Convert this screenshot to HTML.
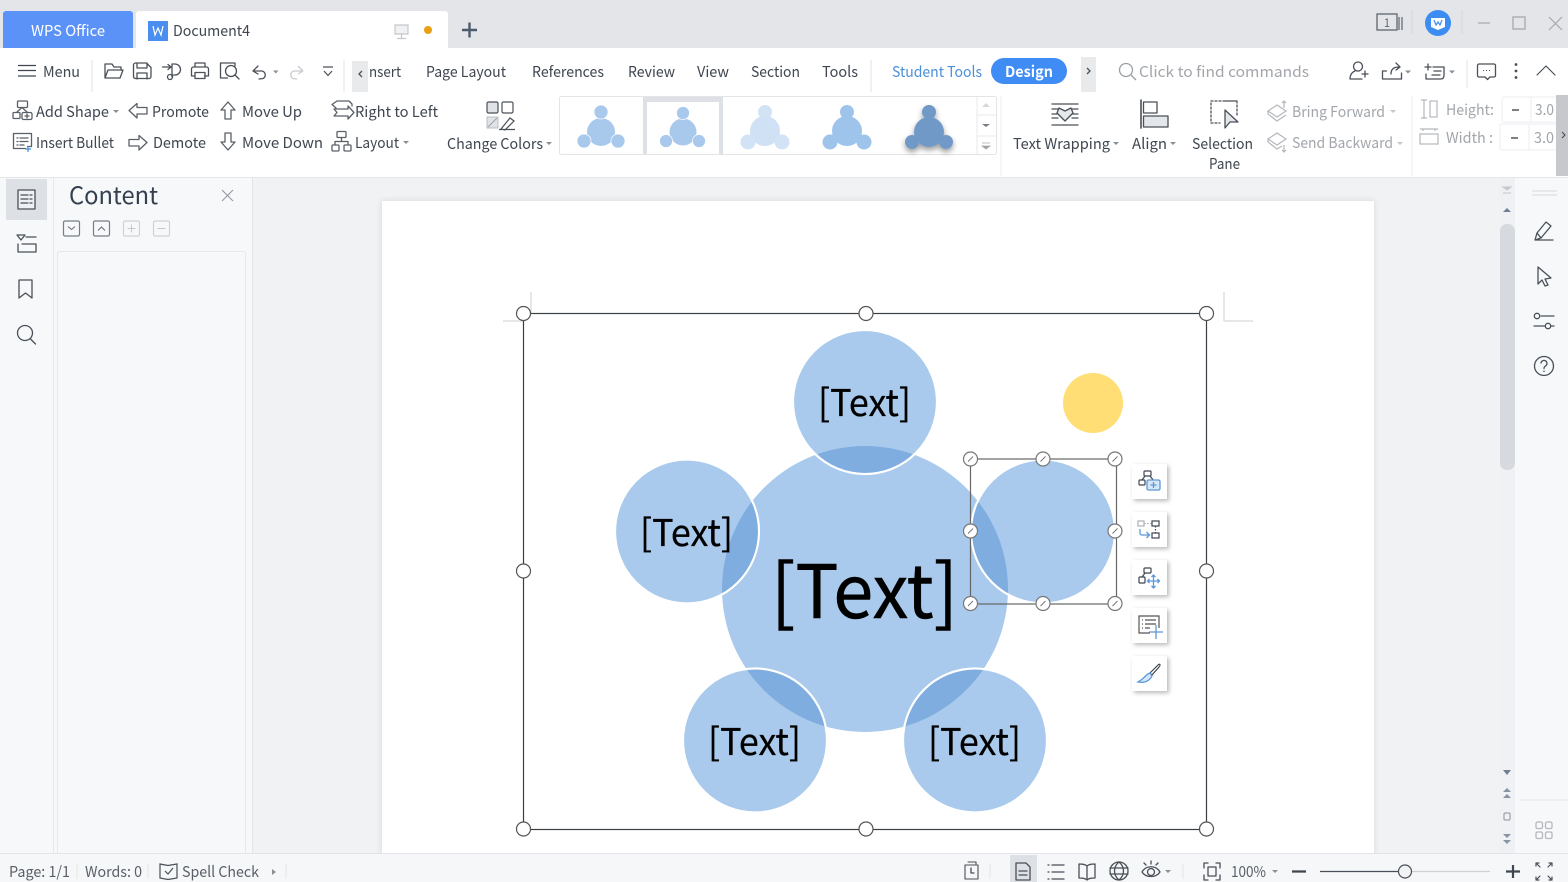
<!DOCTYPE html>
<html><head><meta charset="utf-8"><style>
html,body{margin:0;padding:0;background:#fff;width:1568px;height:882px;overflow:hidden}
svg{display:block}
text{font-family:"Noto Sans CJK SC","Liberation Sans",sans-serif;font-size:15px;fill:#3f4650}
.g{fill:#a2a6ab}
.i{fill:none;stroke:#4a5058;stroke-width:1.3;stroke-linejoin:round;stroke-linecap:round}
.li{fill:none;stroke:#b4b8bc;stroke-width:1.2}
.h{fill:#fff;stroke:#555;stroke-width:1.2}
.hs{fill:#fff;stroke:#777;stroke-width:1.2}
.sl{stroke:#777;stroke-width:1;fill:none}
.bt{fill:#fff;filter:url(#sh)}
.big{fill:#000;font-size:37px;stroke:#000;stroke-width:.25}
.ib{fill:none;stroke:#5a98d8;stroke-width:1.3}
</style></head><body>
<svg width="1568" height="882" viewBox="0 0 1568 882" xmlns="http://www.w3.org/2000/svg">
<defs>
<filter id="sh" x="-30%" y="-30%" width="170%" height="170%"><feDropShadow dx="2" dy="2" stdDeviation="2" flood-color="#000" flood-opacity=".28"/></filter>
<filter id="sp" x="-10%" y="-10%" width="120%" height="120%"><feDropShadow dx="0" dy="0" stdDeviation="3" flood-color="#000" flood-opacity=".12"/></filter>
<filter id="ds" x="-30%" y="-30%" width="160%" height="160%"><feDropShadow dx="0" dy="3" stdDeviation="3" flood-color="#000" flood-opacity=".4"/></filter>
<clipPath id="cc"><circle cx="865" cy="589" r="143"/></clipPath>
</defs>

<!-- base -->
<rect width="1568" height="882" fill="#f0f2f4"/>
<rect width="1568" height="48" fill="#e3e5e8"/>
<rect y="48" width="1568" height="129" fill="#fff"/>
<rect y="177" width="1568" height="1.500" fill="#e4e6e8"/>

<!-- tabs -->
<path d="M3 48V14a3 3 0 0 1 3-3H130a3 3 0 0 1 3 3V48Z" fill="#5b92f8"/>
<text x="31" y="36" textLength="74" lengthAdjust="spacingAndGlyphs" style="fill:#fff">WPS Office</text>
<path d="M136 48V14a3 3 0 0 1 3-3H445a3 3 0 0 1 3 3V48Z" fill="#fff"/>
<rect x="148" y="21" width="20" height="20" fill="#4a8ff0"/>
<path d="M153 26l2 9 3-7 3 7 2-9" fill="none" stroke="#fff" stroke-width="1.200"/>
<text x="173" y="36" textLength="77" lengthAdjust="spacingAndGlyphs">Document4</text>
<path d="M395 25h13v9h-13zM401.500 34v4M397 38.500h9" fill="#f0f1f2" stroke="#c4c8cc" stroke-width="1.200"/>
<circle cx="428" cy="30" r="4" fill="#eb9f12"/>
<path d="M462 30h15M469.500 22.500v15" stroke="#4d5a6e" stroke-width="2.400" fill="none"/>

<!-- window controls -->
<rect x="1377" y="14" width="20" height="16" fill="none" stroke="#5f666e" stroke-width="1.300"/>
<text x="1384" y="27" textLength="6" lengthAdjust="spacingAndGlyphs" style="font-size:12px;fill:#5f666e">1</text>
<path d="M1399 17v13M1402 17v13" stroke="#5f666e" stroke-width="1.200"/>
<path d="M1412 10v24M1462 10v24" stroke="#d5d7da"/>
<circle cx="1438" cy="23" r="13" fill="#3d8cf2"/>
<path d="M1431 18h14v9l-7 3-7-3z" fill="#fff"/>
<path d="M1434 20l2 5 2-3 2 3 2-5" fill="none" stroke="#3d8cf2" stroke-width="1.200"/>
<path d="M1478 23h12" stroke="#a4a8ad" stroke-width="1.200"/>
<rect x="1513" y="17" width="12" height="12" fill="none" stroke="#a4a8ad" stroke-width="1.300"/>
<path d="M1549 17l13 13M1562 17l-13 13" stroke="#a4a8ad" stroke-width="1.200"/>

<!-- menu row -->
<path d="M18 65.500h18M18 70.500h18M18 76h18" stroke="#3f4650" stroke-width="1.300"/>
<text x="43" y="77" textLength="37" lengthAdjust="spacingAndGlyphs">Menu</text>
<path d="M92 60v32M344 60v32M871 60v32M1467 60v28" stroke="#e2e4e6"/>
<g class="i">
<path d="M105 78V64h7l2 3h7v3M105 78l3-8h15l-3 8z"/>
<path d="M133.500 65a2 2 0 0 1 2-2h11l4.500 4.500v9a2 2 0 0 1-2 2h-13.500a2 2 0 0 1-2-2zM137 63v5h10v-5M137 79v-6h10v6"/>
<path d="M162.500 67h8M168 64.500l3 2.500-3 2.500M172 64h3a5.500 5.500 0 0 1 0 11h-3M172 64v13"/><circle cx="170" cy="77" r="2.500"/>
<path d="M195 67v-4h10v4M191.500 76v-7a2 2 0 0 1 2-2h13a2 2 0 0 1 2 2v7h-4M195 76h-3.500M195 72.500h10v6h-10z"/>
<path d="M235 66v-3h-14.500v15h7"/><circle cx="231" cy="71" r="5.500"/><path d="M235 75l4 4"/>
<path d="M253 71l5-5M253 71l5 3M253 71h9a4 4 0 0 1 1 7.500l-4 .5"/>
</g>
<path d="M273 70.500h5.500l-2.700 3z" fill="#8a9097"/>
<path d="M303 71l-5-5M303 71l-5 3M303 71h-9a4 4 0 0 0-1 7.500l4 .5" fill="none" stroke="#c8cbcf" stroke-width="1.300"/>
<path d="M323 67h10M324 71l4 4.500 4-4.500" fill="none" stroke="#4a5058" stroke-width="1.200"/>
<rect x="352" y="61" width="16" height="31" fill="#e8eaec"/>
<path d="M362 71l-3 3 3 3" fill="none" stroke="#4a5058" stroke-width="1.300"/>
<text x="369" y="77" textLength="32" lengthAdjust="spacingAndGlyphs">nsert</text>
<text x="426" y="77" textLength="80" lengthAdjust="spacingAndGlyphs">Page Layout</text>
<text x="532" y="77" textLength="72" lengthAdjust="spacingAndGlyphs">References</text>
<text x="628" y="77" textLength="47" lengthAdjust="spacingAndGlyphs">Review</text>
<text x="697" y="77" textLength="32" lengthAdjust="spacingAndGlyphs">View</text>
<text x="751" y="77" textLength="49" lengthAdjust="spacingAndGlyphs">Section</text>
<text x="822" y="77" textLength="36" lengthAdjust="spacingAndGlyphs">Tools</text>
<text x="892" y="77" textLength="90" lengthAdjust="spacingAndGlyphs" style="fill:#4a90d9">Student Tools</text>
<rect x="991" y="58" width="76" height="26" rx="13" fill="#3f8cf5"/>
<text x="1005" y="77" textLength="48" lengthAdjust="spacingAndGlyphs" style="fill:#fff;font-weight:700">Design</text>
<rect x="1081" y="57" width="15" height="35" fill="#e8eaec"/>
<path d="M1087 68l3 3-3 3" fill="none" stroke="#4a5058" stroke-width="1.300"/>
<circle cx="1126" cy="70" r="6.500" fill="none" stroke="#9aa0a6" stroke-width="1.300"/>
<path d="M1131 75l5 5" stroke="#9aa0a6" stroke-width="1.300"/>
<text x="1139" y="77" textLength="170" lengthAdjust="spacingAndGlyphs" class="g">Click to find commands</text>
<g class="i">
<circle cx="1358" cy="66.500" r="4.500"/><path d="M1355 71c-3 1-5 4-5 8h12M1362 74h6M1365 71v6"/>
<path d="M1382.500 79v-8h4M1382.500 79h19v-6M1391 74c0-5 3-7 8-7M1396 63l4 4-4 3"/>
<path d="M1428 64v6M1425 67h6M1433 67h11v8c0 3-1 4-3 4h-15v-5M1434 71h7M1432 75h8"/>
<path d="M1477.500 65.500a1.500 1.500 0 0 1 1.500-1.500h15a1.500 1.500 0 0 1 1.500 1.500v10a1.500 1.500 0 0 1-1.500 1.500h-4l-2.500 2.500-2.500-2.500h-6a1.500 1.500 0 0 1-1.500-1.500z"/>
<path d="M1537 75l9-9 9 9" stroke-width="1.200"/>
</g>
<path d="M1483 70.500h1M1486 70.500h1M1489 70.500h1" stroke="#4a5058"/>
<path d="M1405 70.500h6l-3 3zM1449 70.500h6l-3 3z" fill="#8a9097"/>
<circle cx="1516" cy="64.500" r="1.400" fill="#4a5058"/><circle cx="1516" cy="71" r="1.400" fill="#4a5058"/><circle cx="1516" cy="77.500" r="1.400" fill="#4a5058"/>

<!-- ribbon left -->
<text x="36" y="117" textLength="73" lengthAdjust="spacingAndGlyphs">Add Shape</text>
<text x="152" y="117" textLength="57" lengthAdjust="spacingAndGlyphs">Promote</text>
<text x="242" y="117" textLength="60" lengthAdjust="spacingAndGlyphs">Move Up</text>
<text x="355" y="117" textLength="83" lengthAdjust="spacingAndGlyphs">Right to Left</text>
<text x="36" y="148" textLength="78" lengthAdjust="spacingAndGlyphs">Insert Bullet</text>
<text x="153" y="148" textLength="53" lengthAdjust="spacingAndGlyphs">Demote</text>
<text x="242" y="148" textLength="81" lengthAdjust="spacingAndGlyphs">Move Down</text>
<text x="355" y="148" textLength="44" lengthAdjust="spacingAndGlyphs">Layout</text>
<text x="447" y="149" textLength="96" lengthAdjust="spacingAndGlyphs">Change Colors</text>
<path d="M113 110h6l-3 3zM403 141h6l-3 3zM546 142h6l-3 3z" fill="#8a9097"/>
<g class="i" stroke-width="1.100" style="stroke:#5a6068">
<rect x="17.500" y="101" width="10" height="6.500" rx="1"/><path d="M22 107.500l-5 4.500M22 107.500l5 4.500"/><rect x="13" y="112.500" width="7" height="6" rx="1"/><rect x="22" y="112.500" width="10" height="7" rx="1.500"/><path d="M27 114v4M25 116h4"/>
<path d="M129 110.500l8-7v4h10v6.500h-10v4z"/>
<path d="M228 102l7 8h-4v9h-6v-9h-4z"/>
<path d="M336 108l-4-3.500 5-3.500h12l3 3v2M334 109h14v-3l6 6.500-6 6.500v-3h-14l3-3.500z"/>
<path d="M13.500 133.500h18v13h-4M13.500 133.500v15h12M17 138h1M20 138h8M17 141.500h1M20 141.500h8M17 145h1M20 145h4"/>
<path d="M147 142.500l-8-7v4h-10v6.500h10v4z"/>
<path d="M228 150l7-8h-4v-9h-6v9h-4z"/>
<rect x="337" y="131.500" width="9" height="6" rx="1"/><path d="M341.500 137.500v4M335 145v-3.500h13v3.500"/><rect x="332" y="145" width="7" height="6" rx="1"/><rect x="344" y="145" width="7" height="6" rx="1"/>
</g>
<path d="M28 146v6M25 149h6" stroke="#4a90d9" stroke-width="1.200"/>
<rect x="487" y="102" width="11" height="11" rx="1.500" fill="#dfe3e7" stroke="#4a5058" stroke-width="1.200"/>
<rect x="502" y="102" width="11" height="11" rx="1.500" fill="#fff" stroke="#4a5058" stroke-width="1.200"/>
<rect x="487" y="117" width="11" height="11" fill="#dfe3e7" stroke="#b8bcc1"/>
<path d="M488 127l9-9" stroke="#9ea3a9"/>
<path d="M501 129l9-11 4 3-9 9zM499 129.500h16" fill="none" stroke="#4a5058" stroke-width="1.200"/>

<!-- gallery -->
<rect x="559.500" y="96.500" width="437" height="58" rx="2" fill="#fff" stroke="#e2e4e7"/>
<path d="M643 154V97h80v57h-4V102h-72v52z" fill="#dde1e6"/>
<path d="M977 97v57M977 115h19M977 136h19" stroke="#e8eaec"/>
<path d="M982 107l4-4 4 4z" fill="#d5d8db"/><path d="M982 124h8l-4 3z" fill="#777d85"/>
<path d="M982 143h8M982 146h8l-4 3z" stroke="#aaa" stroke-width=".8" fill="#9aa0a6"/>
<g fill="#a8c9ec"><circle cx="601" cy="132" r="14"/><g stroke="#fff" stroke-width=".7"><circle cx="601" cy="112" r="7"/><circle cx="584" cy="141" r="7"/><circle cx="618" cy="141" r="7"/></g></g>
<g fill="#a8c9ec"><circle cx="683" cy="132" r="13.500"/><g stroke="#fff" stroke-width=".7"><circle cx="683" cy="113" r="6.500"/><circle cx="666" cy="141" r="6.500"/><circle cx="699" cy="141" r="6.500"/></g></g>
<g fill="#d0e1f5"><circle cx="765" cy="131" r="15"/><circle cx="765" cy="112" r="7" fill-opacity=".95"/><circle cx="748" cy="142" r="7.500" fill-opacity=".95"/><circle cx="782" cy="142" r="7.500" fill-opacity=".95"/></g>
<g fill="#9fc4ec"><circle cx="847" cy="131" r="15"/><circle cx="847" cy="112" r="7"/><circle cx="830" cy="142" r="7.500"/><circle cx="864" cy="142" r="7.500"/></g>
<g fill="#7199c8" filter="url(#ds)"><circle cx="929" cy="132" r="15"/><circle cx="929" cy="112" r="7"/><circle cx="912" cy="142" r="7"/><circle cx="946" cy="142" r="7"/></g>

<!-- ribbon right -->
<path d="M1001 96v80M1412 96v80" stroke="#eceef0"/>
<g class="i" stroke-width="1.100">
<path d="M1052 104h26M1052 125h26M1052 109h6M1052 114h5M1052 118h6M1072 109h6M1073 114h5M1072 118h6"/>
<path d="M1059 108l6 3 6-3 2 5-8 8-8-8z" fill="#e6e9ec"/>
<path d="M1141 100v28" stroke-width="1.600"/><rect x="1143.500" y="102" width="13.500" height="11" fill="#fff"/><rect x="1143.500" y="116" width="24.500" height="11" fill="#e3e6ea"/>
<path d="M1225 101h12v15M1237 101h-26v22h9" stroke-dasharray="2 2"/>
<path d="M1225 110v18l5-6h8z" fill="#e3e6ea"/>
</g>
<text x="1013" y="149" textLength="97" lengthAdjust="spacingAndGlyphs">Text Wrapping</text>
<text x="1132" y="149" textLength="35" lengthAdjust="spacingAndGlyphs">Align</text>
<text x="1192" y="149" textLength="61" lengthAdjust="spacingAndGlyphs">Selection</text>
<text x="1209" y="169" textLength="31" lengthAdjust="spacingAndGlyphs">Pane</text>
<path d="M1113 142h6l-3 3zM1170 142h6l-3 3z" fill="#8a9097"/>
<g class="li">
<path d="M1268 111l9-6 9 6-9 6zM1268 111v3l9 7 9-6"/><path d="M1284 101v7M1282 103l2-2 2 2"/>
<path d="M1268 139l9-6 9 6-9 6zM1268 139v3l9 7 5-3"/><path d="M1284 145v7M1282 150l2 2 2-2"/>
<path d="M1421 100h6M1421 118h6M1424 100v18"/><rect x="1430" y="101" width="7" height="16"/>
<path d="M1420 129h18M1423 129v2M1435 129v2"/><rect x="1420" y="134" width="18" height="10"/>
</g>
<text x="1292" y="117" textLength="93" lengthAdjust="spacingAndGlyphs" class="g">Bring Forward</text>
<text x="1292" y="148" textLength="101" lengthAdjust="spacingAndGlyphs" class="g">Send Backward</text>
<text x="1446" y="115" textLength="48" lengthAdjust="spacingAndGlyphs" class="g">Height:</text>
<text x="1446" y="143" textLength="47" lengthAdjust="spacingAndGlyphs" class="g">Width :</text>
<path d="M1390 110h6l-3 3zM1397 142h6l-3 3z" fill="#c3c6ca"/>
<path d="M1556 97h-52a2 2 0 0 0-2 2v21a2 2 0 0 0 2 2h52M1531 97v25M1556 124h-54a2 2 0 0 0-2 2v22a2 2 0 0 0 2 2h54M1529 124v26" fill="#fff" stroke="#eceef0"/>
<path d="M1512 110h7M1511 138h7" stroke="#555" stroke-width="1.600"/>
<text x="1535" y="115" textLength="19" lengthAdjust="spacingAndGlyphs" class="g">3.0</text>
<text x="1534" y="143" textLength="20" lengthAdjust="spacingAndGlyphs" class="g">3.0</text>
<rect x="1556" y="95" width="12" height="81" fill="#c6c8cb"/>
<path d="M1562 132l3 3-3 3" fill="none" stroke="#3f4650"/>

<!-- left panels -->
<rect y="178" width="53" height="675" fill="#f6f8fa"/>
<rect x="53" y="178" width="1" height="675" fill="#e6e8ea"/>
<rect x="54" y="178" width="198" height="675" fill="#f6f8fa"/>
<rect x="252" y="178" width="1" height="675" fill="#e3e5e8"/>
<rect x="6" y="179" width="41" height="41" fill="#dde1e6"/>
<g class="i">
<path d="M18 190h17v19h-17z" fill="#eef0f4"/><path d="M21 195h7M30 195h2M21 199h7M30 199h2M21 203h7M30 203h2"/>
<path d="M17 235l8 0-4 5zM26 237h10M18 244v8h18v-8h-14"/>
<path d="M19 280h13v18l-6.500-5-6.500 5z"/>
<circle cx="25" cy="333" r="7.500"/><path d="M30.500 339l5 5"/>
</g>
<text x="69" y="204" textLength="89" lengthAdjust="spacingAndGlyphs" style="font-size:24px;fill:#34404f">Content</text>
<path d="M222 190l11 11M233 190l-11 11" stroke="#8f959b" stroke-width="1"/>
<g fill="none">
<rect x="63.500" y="221" width="16" height="15" rx="1.500" stroke="#777d85" stroke-width="1.200"/><path d="M68 226.500l3.500 3 3.500-3" stroke="#666c74"/>
<rect x="93.500" y="221" width="16" height="15" rx="1.500" stroke="#777d85" stroke-width="1.200"/><path d="M98 230.500l3.500-3.500 3.500 3.500" stroke="#666c74"/>
<rect x="123.500" y="221" width="16" height="15" rx="1.500" stroke="#cfd2d6" stroke-width="1.200"/><path d="M131.500 224.500v8M127.500 228.500h8" stroke="#c4c8cc"/>
<rect x="153.500" y="221" width="16" height="15" rx="1.500" stroke="#cfd2d6" stroke-width="1.200"/><path d="M157.500 228.500h8" stroke="#c4c8cc"/>
</g>
<rect x="57.500" y="251.500" width="188" height="620" rx="2" fill="#f6f8fa" stroke="#e6e8eb"/>

<!-- page -->
<rect x="253" y="178" width="1247" height="675" fill="#f1f2f4"/>
<rect x="382" y="201" width="992" height="660" fill="#fff" filter="url(#sp)"/>
<path d="M531 292v21M503 321h20M1224 292v29h29" fill="none" stroke="#cfcfcf"/>

<!-- diagram -->
<circle cx="865" cy="589" r="143" fill="#a9caec"/>
<g stroke="#fff" stroke-width="2.200" fill="#a9caec">
<circle cx="865" cy="402" r="72"/><circle cx="687" cy="531.500" r="72"/><circle cx="1043" cy="531.500" r="72"/><circle cx="755" cy="740.500" r="72"/><circle cx="975" cy="740.500" r="72"/>
</g>
<g clip-path="url(#cc)" fill="#7faddf">
<circle cx="865" cy="402" r="70.900"/><circle cx="687" cy="531.500" r="70.900"/><circle cx="1043" cy="531.500" r="70.900"/><circle cx="755" cy="740.500" r="70.900"/><circle cx="975" cy="740.500" r="70.900"/>
</g>
<circle cx="1093" cy="403" r="30" fill="#ffdf75"/>
<text x="771" y="618" textLength="187" lengthAdjust="spacingAndGlyphs" style="fill:#000;font-size:74px;stroke:#000;stroke-width:.5">[Text]</text>
<text x="818" y="416" textLength="93" lengthAdjust="spacingAndGlyphs" class="big">[Text]</text>
<text x="640" y="546" textLength="93" lengthAdjust="spacingAndGlyphs" class="big">[Text]</text>
<text x="708" y="755" textLength="93" lengthAdjust="spacingAndGlyphs" class="big">[Text]</text>
<text x="928" y="755" textLength="93" lengthAdjust="spacingAndGlyphs" class="big">[Text]</text>

<rect x="523.500" y="313.500" width="683" height="516" fill="none" stroke="#3a3f45" stroke-width="1.200"/>
<g class="h">
<circle cx="523.500" cy="313.500" r="7"/><circle cx="866" cy="313.500" r="7"/><circle cx="1206.500" cy="313.500" r="7"/>
<circle cx="523.500" cy="571" r="7"/><circle cx="1206.500" cy="571" r="7"/>
<circle cx="523.500" cy="829" r="7"/><circle cx="866" cy="829" r="7"/><circle cx="1206.500" cy="829" r="7"/>
</g>
<rect x="970.500" y="459" width="146" height="145" fill="none" stroke="#666" stroke-width="1.200"/>
<g class="hs">
<circle cx="970.500" cy="459" r="7"/><circle cx="1043" cy="459" r="7"/><circle cx="1115" cy="459" r="7"/>
<circle cx="970.500" cy="531" r="7"/><circle cx="1115" cy="531" r="7"/>
<circle cx="970.500" cy="603.500" r="7"/><circle cx="1043" cy="603.500" r="7"/><circle cx="1115" cy="603.500" r="7"/>
</g>
<path class="sl" d="M968 461.500l5-5M1040.500 461.500l5-5M1112.500 461.500l5-5M968 533.500l5-5M1112.500 533.500l5-5M968 606l5-5M1040.500 606l5-5M1112.500 606l5-5"/>

<!-- floating buttons -->
<rect class="bt" x="1132" y="464" width="35" height="35"/>
<rect class="bt" x="1132" y="512" width="35" height="35"/>
<rect class="bt" x="1132" y="560" width="35" height="35"/>
<rect class="bt" x="1132" y="608" width="35" height="35"/>
<rect class="bt" x="1132" y="656" width="35" height="35"/>
<g fill="none" stroke="#3f4650" stroke-width="1.200">
<rect x="1144" y="471" width="7" height="5" rx="1"/><rect x="1139" y="480" width="6" height="5" rx="1"/><path d="M1145 476l-3 4M1150 476l4 5"/>
<rect x="1152" y="521" width="7" height="5"/><rect x="1152" y="533" width="7" height="5"/><path d="M1155.500 526v7" stroke-dasharray="1.500 1.500"/>
<rect x="1144" y="568" width="7" height="5" rx="1"/><rect x="1139" y="577" width="6" height="6" rx="1"/><path d="M1145 573l-3 4"/>
<path d="M1159 628v-12h-20v17h11M1142 620h1M1145 620h11M1142 624h1M1145 624h11M1142 628h1M1145 628h5" stroke="#555"/>
<path d="M1150 673l8-8c1-1 2-1 2 0s0 1-1 2l-7 8z" stroke="#3f4650"/>
</g>
<g class="ib">
<rect x="1147" y="480" width="13" height="10" rx="1.500" fill="#d7e6f6"/><path d="M1153.500 482v6M1150.500 485h6"/>
<path d="M1140 529v4a2 2 0 0 0 2 2h7M1146.500 532l3 3-3 3"/>
<path d="M1147.500 581h12M1153.500 575v13M1149.500 579l-2 2 2 2M1157.500 579l2 2-2 2M1151.500 577l2-2 2 2M1151.500 586l2 2 2-2"/>
<path d="M1156 625v14M1149 632h14"/>
<path d="M1150 673c-4 1-5 5-12 9 5 1 11 0 14-6z" fill="#d7e6f6"/>
</g>
<rect x="1138" y="521" width="6" height="5" fill="none" stroke="#aeb2b7" stroke-width="1.200"/>
<path d="M1144 523.500h8" stroke="#aeb2b7" stroke-dasharray="1.500 1.500"/>

<!-- scrollbar -->
<rect x="1500" y="178" width="15" height="675" fill="#eef0f3"/>
<path d="M1503 187h8l-4 3zM1503 193h8" stroke="#c4c7cb" fill="#c4c7cb"/>
<rect x="1500" y="201" width="15" height="640" fill="#f0f1f4"/>
<path d="M1503 212l4-4 4 4z" fill="#6f7f92"/>
<rect x="1500" y="224" width="15" height="246" rx="7" fill="#d6dadf"/>
<path d="M1503 770h8l-4 5z" fill="#6f7f92"/>
<path d="M1503 792l4-4 4 4zM1503 798l4-4 4 4z" fill="#8a94a0"/>
<rect x="1504" y="813" width="6" height="7" rx="1" fill="none" stroke="#8a94a0"/>
<path d="M1503 834h8l-4 4zM1503 840h8l-4 4z" fill="#8a94a0"/>

<!-- right panel -->
<rect x="1515" y="178" width="53" height="675" fill="#f6f8fa"/>
<path d="M1532 191h25M1532 195h25" stroke="#d6d8db"/>
<g class="i">
<path d="M1535 240h18M1535 240l2-7 9-11 5 4-10 12zM1537 233l4 5"/>
<path d="M1538 267l13 11-6 1 3 6-3 1-3-6-4 4z"/>
<path d="M1541 316h13M1534 326h11M1551 326h3"/><circle cx="1537" cy="316" r="2.700"/><circle cx="1548" cy="326" r="2.700"/>
<circle cx="1544" cy="366" r="9.500"/><path d="M1541 363a3 3 0 1 1 4.500 3c-1 .6-1.500 1-1.500 2.500"/><path d="M1544 371v.5"/>
</g>
<path d="M1520 800h48" stroke="#e4e6e8"/>
<g fill="none" stroke="#b4b8bc" stroke-width="1.300">
<rect x="1536" y="822" width="6.500" height="6.500" rx="1.500"/><rect x="1545.500" y="822" width="6.500" height="6.500" rx="1.500"/>
<rect x="1536" y="832" width="6.500" height="6.500" rx="1.500"/><rect x="1545.500" y="832" width="6.500" height="6.500" rx="1.500"/>
</g>

<!-- status bar -->
<rect y="853" width="1568" height="29" fill="#f5f7f9"/>
<rect y="853" width="1568" height="1" fill="#e2e4e7"/>
<text x="9" y="877" textLength="61" lengthAdjust="spacingAndGlyphs" style="fill:#5a6068">Page: 1/1</text>
<text x="85" y="877" textLength="57" lengthAdjust="spacingAndGlyphs" style="fill:#5a6068">Words: 0</text>
<text x="182" y="877" textLength="77" lengthAdjust="spacingAndGlyphs" style="fill:#5a6068">Spell Check</text>
<path d="M77 864v15M148 864v15M286 864v15M990 864v15M1183 864v15" stroke="#e3e5e8"/>
<path d="M160 864l8 1.500 9-1.500v14l-9 1.500-8-1.500zM165 871l3 3 5-6" fill="none" stroke="#4a5058" stroke-width="1.200"/>
<path d="M272 869l4 3-4 3z" fill="#8a9097"/>
<rect x="1010" y="855" width="27" height="27" fill="#dde1e6"/>
<g class="i" stroke="#4a5058">
<path d="M968 862h8v2M965 865h13v14h-13z" stroke-width="1.100"/><path d="M971 868v5h3"/>
<path d="M1016 863h10l4 4v13h-14zM1019 871h8M1019 875h8"/>
<path d="M1052 865h12M1052 872h12M1052 879h12M1048 865h1M1048 872h1M1048 879h1"/>
<path d="M1087 866c-2-2-5-2-8-2v14c3 0 6 0 8 2 2-2 5-2 8-2v-14c-3 0-6 0-8 2zM1087 866v14"/>
<circle cx="1119" cy="871" r="9"/><path d="M1110 868h18M1110 874h18M1119 862c-6 5-6 13 0 18M1119 862c6 5 6 13 0 18"/>
<path d="M1142 872c4-7 14-7 18 0-4 6-14 6-18 0zM1151 861v3M1144 863l2 2M1158 863l-2 2"/><circle cx="1151" cy="872" r="3.500"/>
<path d="M1204 868v-5h4M1216 863h4v5M1204 875v5h4M1216 880h4v-5"/><rect x="1208" y="867" width="8" height="9"/>
<path d="M1536 863l4 4M1536 863h3M1536 863v3M1552 863l-4 4M1552 863h-3M1552 863v3M1536 880l4-4M1536 880h3M1536 880v-3M1552 880l-4-4M1552 880h-3M1552 880v-3" stroke-width="1.200"/>
</g>
<path d="M1165 870h6l-3 3zM1272 870h6l-3 3z" fill="#8a9097"/>
<text x="1231" y="877" textLength="35" lengthAdjust="spacingAndGlyphs" style="fill:#5a6068">100%</text>
<path d="M1292 871.500h14M1506 871.500h14M1513 865v13" stroke="#3f4650" stroke-width="2.200"/>
<path d="M1320 871.500h85" stroke="#4a5058" stroke-width="1.200"/>
<path d="M1405 871.500h85" stroke="#cdd0d4" stroke-width="1.200"/>
<circle cx="1405" cy="871.500" r="6.500" fill="#f2f3f5" stroke="#4a5058" stroke-width="1.200"/>
</svg>
</body></html>
